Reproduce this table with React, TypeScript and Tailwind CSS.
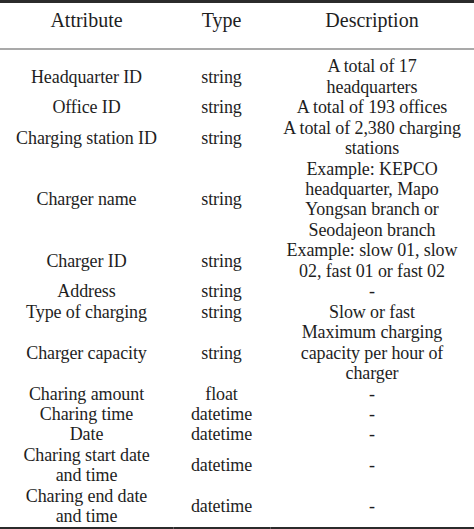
const rows: { attr: string[]; type: string; desc: string[] }[] = [
  { attr: ["Headquarter ID"], type: "string", desc: ["A total of 17", "headquarters"] },
  { attr: ["Office ID"], type: "string", desc: ["A total of 193 offices"] },
  { attr: ["Charging station ID"], type: "string", desc: ["A total of 2,380 charging", "stations"] },
  {
    attr: ["Charger name"],
    type: "string",
    desc: ["Example: KEPCO", "headquarter, Mapo", "Yongsan branch or", "Seodajeon branch"],
  },
  { attr: ["Charger ID"], type: "string", desc: ["Example: slow 01, slow", "02, fast 01 or fast 02"] },
  { attr: ["Address"], type: "string", desc: ["-"] },
  { attr: ["Type of charging"], type: "string", desc: ["Slow or fast"] },
  {
    attr: ["Charger capacity"],
    type: "string",
    desc: ["Maximum charging", "capacity per hour of", "charger"],
  },
  { attr: ["Charing amount"], type: "float", desc: ["-"] },
  { attr: ["Charing time"], type: "datetime", desc: ["-"] },
  { attr: ["Date"], type: "datetime", desc: ["-"] },
  { attr: ["Charing start date", "and time"], type: "datetime", desc: ["-"] },
  { attr: ["Charing end date", "and time"], type: "datetime", desc: ["-"] },
];

function Lines({ lines }: { lines: string[] }) {
  return (
    <div className="flex flex-col items-center justify-center text-center">
      {lines.map((l, i) => (
        <span key={i} className="whitespace-nowrap">
          {l}
        </span>
      ))}
    </div>
  );
}

export default function App() {
  return (
    <div className="w-[474px] h-[529px] bg-white text-[#1e1e1e] overflow-hidden flex flex-col font-['Liberation_Serif',serif]">
      {/* header */}
      <div className="border-t-[3px] border-[#2b2b2b]">
        <div className="grid grid-cols-[173px_97px_204px] h-[45px] pb-[12px] items-center text-[20px] leading-[24px]">
          <div className="text-center">Attribute</div>
          <div className="text-center">Type</div>
          <div className="text-center">Description</div>
        </div>
      </div>
      <div className="h-[3px] bg-[#a9a9a9]" />

      {/* body */}
      <div className="pt-[6px] text-[18px] tracking-[-0.1px] leading-[20.45px]">
        {rows.map((r, i) => (
          <div key={i} className="grid grid-cols-[173px_97px_204px] items-center">
            <Lines lines={r.attr} />
            <Lines lines={[r.type]} />
            <Lines lines={r.desc} />
          </div>
        ))}
      </div>

      {/* bottom rule */}
      <div className="mt-auto grid grid-cols-[173px_97px_204px] h-[3px] bg-[#2b2b2b]">
        <div />
        <div className="border-l border-[#5a5a5a]" />
        <div className="border-l border-[#5a5a5a]" />
      </div>
    </div>
  );
}
